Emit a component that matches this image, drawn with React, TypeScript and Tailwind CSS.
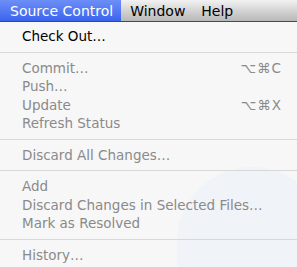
import clsx from 'clsx';

type Item = { label: string; shortcut?: string; enabled?: boolean } | 'sep';

const items: Item[] = [
    { label: 'Check Out…', enabled: true },
    'sep',
    { label: 'Commit…', shortcut: '⌥⌘C' },
    { label: 'Push…' },
    { label: 'Update', shortcut: '⌥⌘X' },
    { label: 'Refresh Status' },
    'sep',
    { label: 'Discard All Changes…' },
    'sep',
    { label: 'Add' },
    { label: 'Discard Changes in Selected Files…' },
    { label: 'Mark as Resolved' },
    'sep',
    { label: 'History…' },
];

export default function App() {
    return (
        <div className="w-[297px] h-[267px] overflow-hidden bg-[#f7f7f7] font-['DejaVu_Sans',sans-serif] relative">
            {/* Menu bar */}
            <div className="h-[22px] flex items-stretch bg-gradient-to-b from-[#f2f2f2] via-[#d4d4d4] to-[#b8b8b8] border-b border-[#4a4a4a] text-[14px] leading-none relative z-10">
                <div className="pl-[10px] pr-[8px] flex items-center text-white bg-gradient-to-b from-[#6d8ef7] to-[#3a64ef]">
                    Source Control
                </div>
                <div className="pl-[9px] pr-[8px] flex items-center text-black">Window</div>
                <div className="px-[8px] flex items-center text-black">Help</div>
            </div>

            {/* faint window behind translucent menu */}
            <div className="absolute right-[-30px] bottom-[-70px] w-[150px] h-[170px] rounded-full bg-[#f0f3f8]" />

            {/* Menu */}
            <div className="relative pt-[5px] text-[13.5px] leading-[18.5px]">
                {items.map((it, i) =>
                    it === 'sep' ? (
                        <div key={i} className="h-[13px] flex items-center">
                            <div className="w-full h-px bg-[#d8d8d8]" />
                        </div>
                    ) : (
                        <div
                            key={i}
                            className={clsx(
                                'h-[18.5px] pl-[22px] pr-[15px] flex items-center justify-between',
                                it.enabled ? 'text-black' : 'text-[#8a8a8a]'
                            )}
                        >
                            <span>{it.label}</span>
                            {it.shortcut && <span className="tracking-[1px]">{it.shortcut}</span>}
                        </div>
                    )
                )}
            </div>
        </div>
    );
}
